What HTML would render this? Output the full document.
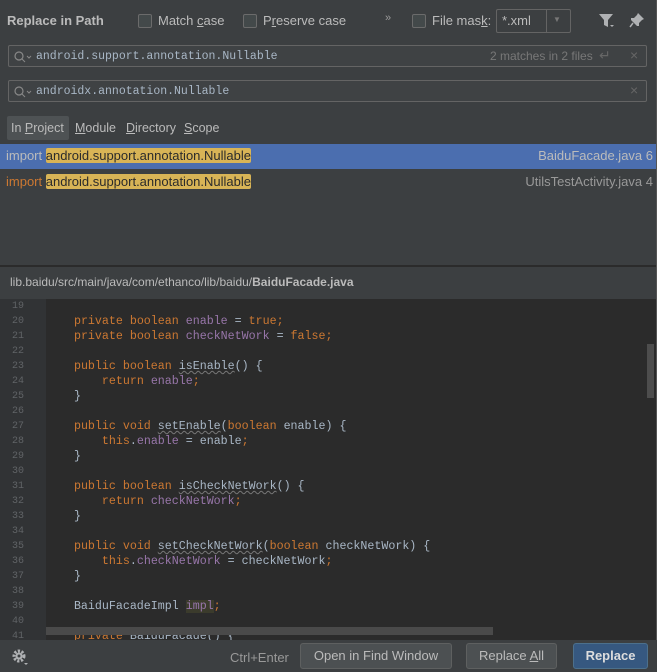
<!DOCTYPE html>
<html><head><meta charset="utf-8"><style>
*{margin:0;padding:0;box-sizing:border-box}
body{width:657px;height:672px;background:#3c3f41;font-family:"Liberation Sans",sans-serif;font-size:13px;color:#bbbbbb;position:relative;overflow:hidden}
.a{position:absolute;white-space:pre}
.cb{position:absolute;width:14px;height:14px;border:1px solid #6b6b6b;border-radius:2px;background:#43494a}
.fld{position:absolute;left:8px;width:639px;height:22px;border:1px solid #646464;border-radius:2px;background:#3f4244}
.fld .t{position:absolute;left:27px;top:4px;font-family:"Liberation Mono",monospace;font-size:11.5px;color:#a9b7c6}
.mono{font-family:"Liberation Mono",monospace;font-size:11.65px}
.ln{position:absolute;left:0;width:46px;height:341px;top:299px;background:#313335}
.lnum{position:absolute;left:12px;color:#606366;font-family:"Liberation Mono",monospace;font-size:10px}
.k{color:#cc7832}.f{color:#9876aa}.p{color:#a9b7c6}.m{color:#a9b7c6;text-decoration:underline wavy #777;text-decoration-thickness:1px}
.hl{background:#d8b456;color:#2b2b2b;border-radius:2px}
.btn{position:absolute;top:643px;height:26px;border:1px solid #5e6060;border-radius:3px;background:#4c5052;color:#bbb;text-align:center;line-height:24px;font-size:13px}
</style></head><body>
<div class="a" style="left:7px;top:13px;font-weight:bold;font-size:13px;color:#bbb">Replace in Path</div>
<div class="cb" style="left:138px;top:14px"></div><div class="a" style="left:158px;top:13px">Match <u>c</u>ase</div>
<div class="cb" style="left:243px;top:14px"></div><div class="a" style="left:263px;top:13px">P<u>r</u>eserve case</div>
<div class="a" style="left:385px;top:12px;font-size:11px;color:#999">»</div>
<div class="cb" style="left:412px;top:14px"></div><div class="a" style="left:432px;top:13px">File mas<u>k</u>:</div>
<div style="position:absolute;left:496px;top:9px;width:75px;height:24px;border:1px solid #646464;border-radius:2px;background:#3c3f41"></div>
<div style="position:absolute;left:546px;top:10px;width:1px;height:22px;background:#646464"></div>
<div class="a" style="left:502px;top:13px;color:#bbb">*.xml</div>
<div class="a" style="left:553px;top:15px;font-size:8px;color:#777">▼</div>
<svg style="position:absolute;left:598px;top:13px" width="18" height="16"><path d="M1 1h14l-5 6v7l-4-2V7z" fill="#afb1b3"/><path d="M12 12l2 2 2-2" fill="#afb1b3"/></svg>
<svg style="position:absolute;left:629px;top:12px" width="16" height="16"><path d="M9 1l6 6-2 1-3 3 0 3-2 0-6-6 0-2 3 0 3-3z" fill="#afb1b3"/><path d="M4 11l-3 4" stroke="#afb1b3" stroke-width="1.5"/></svg>

<div class="fld" style="top:45px"><svg style="position:absolute;left:4px;top:5px" width="20" height="12"><circle cx="6" cy="5" r="4" stroke="#888" fill="none" stroke-width="1.2"/><path d="M9 8l3 3M14 5l2 2 2-2" stroke="#888" fill="none"/></svg><span class="t">android.support.annotation.Nullable</span>
<span class="a" style="left:481px;top:3px;color:#787878;font-size:12px">2 matches in 2 files</span><span class="a" style="left:590px;top:1px;color:#666;font-size:14px">↵</span><span class="a" style="left:621px;top:1px;color:#666;font-size:14px">×</span></div>
<div class="fld" style="top:80px"><svg style="position:absolute;left:4px;top:5px" width="20" height="12"><circle cx="6" cy="5" r="4" stroke="#888" fill="none" stroke-width="1.2"/><path d="M9 8l3 3M14 5l2 2 2-2" stroke="#888" fill="none"/></svg><span class="t">androidx.annotation.Nullable</span><span class="a" style="left:621px;top:1px;color:#666;font-size:14px">×</span></div>

<div style="position:absolute;left:7px;top:116px;width:62px;height:24px;background:#4e5254;border-radius:2px"></div>
<div class="a" style="left:11px;top:121px;font-size:12.5px">In <u>P</u>roject</div>
<div class="a" style="left:75px;top:121px;font-size:12.5px"><u>M</u>odule</div>
<div class="a" style="left:126px;top:121px;font-size:12.5px"><u>D</u>irectory</div>
<div class="a" style="left:184px;top:121px;font-size:12.5px"><u>S</u>cope</div>

<div style="position:absolute;left:0;top:144px;width:657px;height:25px;background:#4b6eaf"></div>
<div class="a" style="left:6px;top:148px;font-size:13px;color:#bbb">import <span class="hl">android.support.annotation.Nullable</span></div>
<div class="a" style="right:4px;top:148px;font-size:13px;color:#bbb">BaiduFacade.java 6</div>
<div class="a" style="left:6px;top:174px;font-size:13px;color:#cc7832">import <span class="hl">android.support.annotation.Nullable</span></div>
<div class="a" style="right:4px;top:174px;font-size:13px;color:#999">UtilsTestActivity.java 4</div>

<div style="position:absolute;left:0;top:265px;width:657px;height:2px;background:#2b2b2b"></div>
<div class="a" style="left:10px;top:275px;font-size:12px;color:#bbb">lib.baidu/src/main/java/com/ethanco/lib/baidu/<b>BaiduFacade.java</b></div>

<div style="position:absolute;left:0;top:299px;width:657px;height:341px;background:#2b2b2b"></div>
<div class="ln"></div>
<div style="position:absolute;left:647px;top:344px;width:7px;height:54px;background:#4d4d4d"></div>

<div class="lnum" style="top:299px;line-height:15px">19<br>20<br>21<br>22<br>23<br>24<br>25<br>26<br>27<br>28<br>29<br>30<br>31<br>32<br>33<br>34<br>35<br>36<br>37<br>38<br>39<br>40<br>41</div>
<div class="a mono" style="left:46px;top:314px;line-height:15px;color:#a9b7c6">    <span class="k">private boolean</span> <span class="f">enable</span> = <span class="k">true;</span>
    <span class="k">private boolean</span> <span class="f">checkNetWork</span> = <span class="k">false;</span>

    <span class="k">public boolean</span> <span class="m">isEnable</span>() {
        <span class="k">return</span> <span class="f">enable</span><span class="k">;</span>
    }

    <span class="k">public void</span> <span class="m">setEnable</span>(<span class="k">boolean</span> enable) {
        <span class="k">this</span>.<span class="f">enable</span> = enable<span class="k">;</span>
    }

    <span class="k">public boolean</span> <span class="m">isCheckNetWork</span>() {
        <span class="k">return</span> <span class="f">checkNetWork</span><span class="k">;</span>
    }

    <span class="k">public void</span> <span class="m">setCheckNetWork</span>(<span class="k">boolean</span> checkNetWork) {
        <span class="k">this</span>.<span class="f">checkNetWork</span> = checkNetWork<span class="k">;</span>
    }

    BaiduFacadeImpl <span class="f" style="background:#3b3b2c">impl</span><span class="k">;</span>

    <span class="k">private</span> BaiduFacade() {</div>
<div style="position:absolute;left:46px;top:627px;width:447px;height:8px;background:#4a4a4a"></div>
<div style="position:absolute;left:656px;top:0;width:1px;height:672px;background:#555"></div>

<div style="position:absolute;left:0;top:640px;width:657px;height:32px;background:#3c3f41"></div>
<svg style="position:absolute;left:11px;top:648px" width="18" height="18"><circle cx="8" cy="8" r="5" fill="none" stroke="#afb1b3" stroke-width="3" stroke-dasharray="2.2 1.5"/><circle cx="8" cy="8" r="3.5" fill="#afb1b3"/><circle cx="8" cy="8" r="1.5" fill="#3c3f41"/><path d="M13 15h4l-2 2z" fill="#afb1b3"/></svg>
<div class="a" style="left:230px;top:650px;color:#999">Ctrl+Enter</div>
<div class="btn" style="left:300px;width:152px">Open in Find Window</div>
<div class="btn" style="left:466px;width:91px">Replace <u>A</u>ll</div>
<div class="btn" style="left:573px;width:75px;background:#365880;border-color:#4c708c;color:#ddd;font-weight:bold">Replace</div>
</body></html>
